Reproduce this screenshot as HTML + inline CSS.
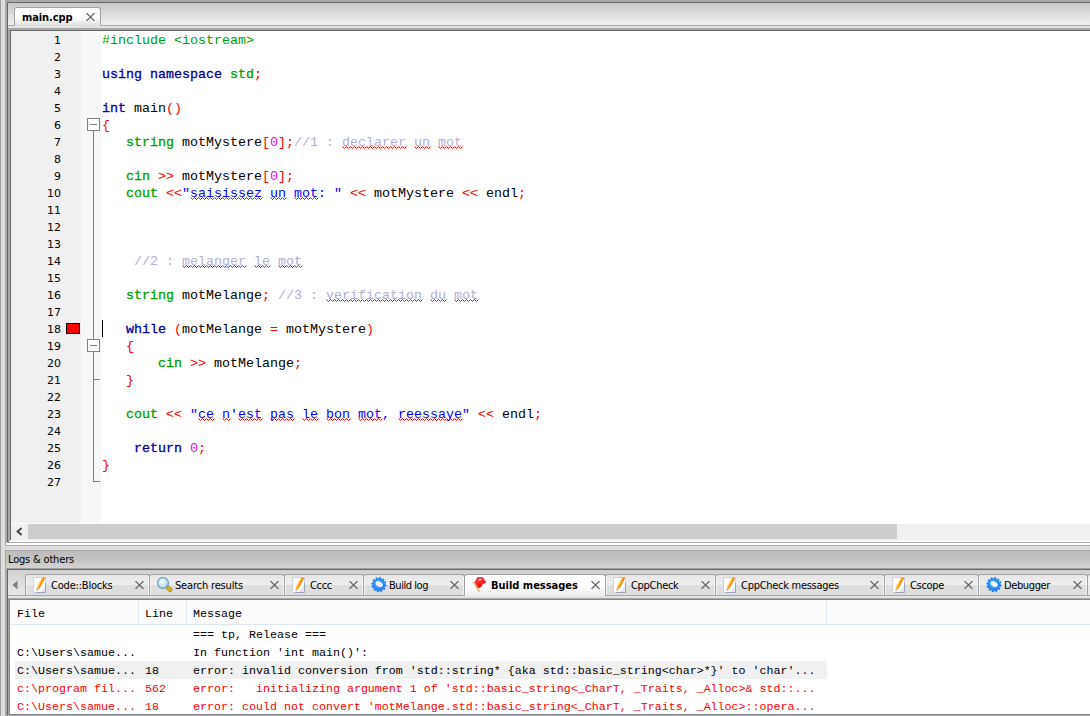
<!DOCTYPE html>
<html><head><meta charset="utf-8"><title>main.cpp</title>
<style>
html,body{margin:0;padding:0;}
body{width:1090px;height:716px;overflow:hidden;position:relative;background:#a8a8a8;font-family:"Liberation Sans","DejaVu Sans",sans-serif;}
.abs{position:absolute;}
/* left strip */
#l0{left:0;top:0;width:1px;height:716px;background:#a0a0a0;}
#l1{left:1px;top:0;width:4px;height:716px;background:#dedede;}
#l2{left:5px;top:0;width:2px;height:546px;background:#a8a8a8;}
#top0{left:5px;top:0;width:1085px;height:2px;background:#a8a8a8;}
/* editor notebook */
#nb{left:7px;top:2px;width:1090px;height:540px;border:1px solid #686868;background:#a8a8a8;box-sizing:border-box;}
#tabbar{left:8px;top:3px;width:1082px;height:22px;background:linear-gradient(#c8c8c8,#dcdcdc 50%,#f0f0f0);}
#tabline{left:8px;top:25px;width:1082px;height:1px;background:#a8a8a8;}
#tabgap{left:8px;top:26px;width:1082px;height:2px;background:#e2e2e2;}
#tab1{left:14px;top:7px;width:87px;height:19px;border:1px solid #a0a0a0;border-bottom:none;border-radius:3px 3px 0 0;background:linear-gradient(#ffffff 50%,#dedede);box-sizing:border-box;}
#tab1 .t{position:absolute;left:7px;top:3px;font-size:11px;font-weight:bold;color:#000;letter-spacing:-0.09px;}
.x{position:absolute;}
.x svg{display:block}
/* editor */
#edborder2{left:10px;top:30px;width:1080px;height:511px;background:#686868;}
#ed{left:11px;top:31px;width:1079px;height:509px;background:#fff;overflow:hidden;}
#nummargin{left:0;top:0;width:70px;height:492px;background:#f0f0f0;}
#foldmargin{left:70px;top:0;width:20px;height:492px;background-color:#fff;
 background-image:linear-gradient(45deg,#f0f0f0 25%,transparent 25%,transparent 75%,#f0f0f0 75%),linear-gradient(45deg,#f0f0f0 25%,transparent 25%,transparent 75%,#f0f0f0 75%);background-size:2px 2px;background-position:0 0,1px 1px;}
#nums{left:0;top:0;width:50px;text-align:right;font-family:"DejaVu Sans","Liberation Sans",sans-serif;font-size:11px;color:#000;}
#nums div{height:17px;line-height:19px;}
#code{left:91px;top:1px;font-family:"Liberation Mono","DejaVu Sans Mono",monospace;font-size:13.333px;color:#000;}
#code .ln{height:17px;line-height:17px;white-space:pre;}
.pp{color:#00a000;}
.kw{color:#0000a0;-webkit-text-stroke:0.3px #0000a0;}
.ukw{color:#00a000;-webkit-text-stroke:0.3px #00a000;}
.op{color:#ff0000;}
.num{color:#f000f0;}
.str{color:#0000ff;}
.cm{color:#b0b0d8;}
.cms{color:#b0b0d8;}
.strs{color:#0000ff;}
#sqs{left:92px;top:0;}
.fold{position:absolute;background:#808080;}
.fbox{position:absolute;width:13px;height:13px;box-sizing:border-box;border:1px solid #808080;background:#fff;}
.fbox i{position:absolute;left:2px;top:5px;width:7px;height:1px;background:#808080;}
#bp{left:55px;top:292px;width:14px;height:11px;box-sizing:border-box;border:1px solid #000;background:#ff0000;}
#caret{left:91px;top:289px;width:1px;height:17px;background:#000;}
/* scrollbar */
#hs{left:0;top:493px;width:1079px;height:16px;background:#f0f0f0;}
#hsthumb{left:17px;top:0;width:869px;height:15px;background:#cdcdcd;}
/* logs */
#gapA{left:10px;top:540px;width:1085px;height:1px;background:#f4f4f4;}
#gapB{left:9px;top:541px;width:1081px;height:1px;background:#fff;}
#gapC{left:8px;top:542px;width:1082px;height:1px;background:#a8a8a8;}
#gapD{left:6px;top:543px;width:1084px;height:2px;background:#fff;}
#gapE{left:5px;top:545px;width:1085px;height:1px;background:#a8a8a8;}
#gapF{left:1px;top:546px;width:1089px;height:4px;background:#dcdcdc;}
#gapG{left:5px;top:550px;width:1085px;height:1px;background:#a8a8a8;}
#logtitle{left:6px;top:551px;width:1084px;height:17px;background:linear-gradient(#bcbcbc,#c4c4c4 50%,#d4d4d4);font-size:11px;color:#000;}
#logl{left:5px;top:551px;width:1px;height:165px;background:#a8a8a8;}
#logl2{left:6px;top:568px;width:1px;height:148px;background:#a8a8a8;}
#logd1{left:7px;top:568px;width:1083px;height:1px;background:#a0a0a0;}
#logd2{left:7px;top:569px;width:1083px;height:1px;background:#686868;}
#logd3{left:7px;top:569px;width:1px;height:147px;background:#686868;}
#logs{left:8px;top:570px;width:1082px;height:146px;background:linear-gradient(#cfcfcf,#dedede 12px,#e6e6e6 25px,#e6e6e6);}
#logs2{left:8px;top:595px;width:1082px;height:1px;background:#a8a8a8;}
#logs3{left:8px;top:596px;width:1082px;height:2px;background:#e4e4e4;}
#logs4{left:8px;top:598px;width:1082px;height:1px;background:#a8a8a8;}
#logs5{left:8px;top:598px;width:1px;height:118px;background:#a8a8a8;}
#listb{left:9px;top:599px;width:1081px;height:116px;background:#828790;}
#listbot{left:7px;top:715px;width:1083px;height:1px;background:#a8a8a8;}
.ltab{position:absolute;top:574px;height:21px;box-sizing:border-box;border:1px solid #a0a0a0;border-bottom:none;border-radius:3px 3px 0 0;background:linear-gradient(#e6e6e6,#efefef 10px,#dedede 10px,#dedede);box-shadow:inset 1px 0 0 rgba(255,255,255,.6),inset -1px 0 0 rgba(255,255,255,.6);font-size:11px;color:#000;}
.ltab.act{background:linear-gradient(#fff 50%,#ececec);font-weight:bold;height:22px;}
.ltab .t{position:absolute;top:4px;white-space:nowrap;}
.ltab .ic{position:absolute;top:2px;}
.ltab .lx{position:absolute;top:6px;}
.ui{font-family:"DejaVu Sans Condensed","DejaVu Sans","Liberation Sans",sans-serif;font-stretch:condensed;}
#list{left:10px;top:600px;width:1080px;height:114px;overflow:hidden;background:#fff;font-family:"Liberation Mono",monospace;font-size:11.67px;color:#000;white-space:pre;}
#lhead{left:0;top:0;width:1080px;height:24px;background:#fcfcfc;border-bottom:1px solid #dfe8f6;}
.sep{position:absolute;top:0;width:1px;height:24px;background:#e2eaf8;}
.row{position:absolute;left:0;height:18px;line-height:18px;}
.row span{position:absolute;top:0}
.c1{left:7px}.c2{left:135px}.c3{left:183px}
.red{color:#ff0000}
#hl{left:5px;top:61px;width:812px;height:18px;background:#f0f0f0;}
</style></head><body>
<svg width="0" height="0" style="position:absolute"><defs>
<linearGradient id="g-pen" x1="0" y1="0" x2="1" y2="0.4"><stop offset="0" stop-color="#ffc840"/><stop offset="0.5" stop-color="#ff9a10"/><stop offset="1" stop-color="#f06a08"/></linearGradient>
<radialGradient id="g-lens" cx="0.4" cy="0.35" r="0.7"><stop offset="0" stop-color="#f4fbff"/><stop offset="1" stop-color="#a8d0e4"/></radialGradient>
<linearGradient id="g-flag" x1="0" y1="0" x2="0.3" y2="1"><stop offset="0" stop-color="#ff4a54"/><stop offset="0.4" stop-color="#ff3038"/><stop offset="1" stop-color="#f40810"/></linearGradient>
<radialGradient id="g-gear" cx="0.5" cy="0.45" r="0.55"><stop offset="0.4" stop-color="#40a8ff"/><stop offset="1" stop-color="#1472ec"/></radialGradient>
</defs></svg>
<div class="abs" id="nb"></div>
<div class="abs" id="l0"></div><div class="abs" id="l1"></div><div class="abs" id="l2"></div><div class="abs" id="top0"></div>
<div class="abs" id="tabbar"></div><div class="abs" id="tabline"></div><div class="abs" id="tabgap"></div>
<div class="abs ui" id="tab1"><span class="t">main.cpp</span>
<span class="x" style="left:71px;top:5px"><svg width="9" height="8" viewBox="0 0 9 8"><path d="M0.4 0L8.6 8M8.6 0L0.4 8" stroke="#686868" stroke-width="1.3" fill="none"/></svg></span></div>
<div class="abs" id="edborder2"></div>
<div class="abs" id="ed">
 <div class="abs" id="nummargin"></div>
 <div class="abs" id="foldmargin"></div>
 <div class="fold" style="left:82px;top:100px;width:1px;height:351px"></div>
 <div class="fold" style="left:82px;top:450px;width:7px;height:1px"></div>
 <div class="fold" style="left:82px;top:348px;width:7px;height:1px"></div>
 <div class="fbox" style="left:76px;top:87px"><i></i></div>
 <div class="fbox" style="left:76px;top:308px"><i></i></div>
 <div class="abs" id="bp"></div>
 <div class="abs" id="caret"></div>
 <div class="abs" id="nums">
<div>1</div>
<div>2</div>
<div>3</div>
<div>4</div>
<div>5</div>
<div>6</div>
<div>7</div>
<div>8</div>
<div>9</div>
<div>10</div>
<div>11</div>
<div>12</div>
<div>13</div>
<div>14</div>
<div>15</div>
<div>16</div>
<div>17</div>
<div>18</div>
<div>19</div>
<div>20</div>
<div>21</div>
<div>22</div>
<div>23</div>
<div>24</div>
<div>25</div>
<div>26</div>
<div>27</div>
 </div>
 <svg class="abs" id="sqs" width="600" height="492" viewBox="0 0 600 492"><path d="M239.5 115.5l2 2l2 -2l2 2l2 -2l2 2l2 -2l2 2l2 -2l2 2l2 -2l2 2l2 -2l2 2l2 -2l2 2l2 -2l2 2l2 -2l2 2l2 -2l2 2l2 -2l2 2l2 -2l2 2l2 -2l2 2l2 -2l2 2l2 -2l2 2l2 -2M311.5 115.5l2 2l2 -2l2 2l2 -2l2 2l2 -2l2 2l2 -2M335.5 115.5l2 2l2 -2l2 2l2 -2l2 2l2 -2l2 2l2 -2l2 2l2 -2l2 2l2 -2M87.5 166.5l2 2l2 -2l2 2l2 -2l2 2l2 -2l2 2l2 -2l2 2l2 -2l2 2l2 -2l2 2l2 -2l2 2l2 -2l2 2l2 -2l2 2l2 -2l2 2l2 -2l2 2l2 -2l2 2l2 -2l2 2l2 -2l2 2l2 -2l2 2l2 -2l2 2l2 -2l2 2l2 -2M167.5 166.5l2 2l2 -2l2 2l2 -2l2 2l2 -2l2 2l2 -2M191.5 166.5l2 2l2 -2l2 2l2 -2l2 2l2 -2l2 2l2 -2l2 2l2 -2l2 2l2 -2M79.5 234.5l2 2l2 -2l2 2l2 -2l2 2l2 -2l2 2l2 -2l2 2l2 -2l2 2l2 -2l2 2l2 -2l2 2l2 -2l2 2l2 -2l2 2l2 -2l2 2l2 -2l2 2l2 -2l2 2l2 -2l2 2l2 -2l2 2l2 -2l2 2l2 -2M151.5 234.5l2 2l2 -2l2 2l2 -2l2 2l2 -2l2 2l2 -2M175.5 234.5l2 2l2 -2l2 2l2 -2l2 2l2 -2l2 2l2 -2l2 2l2 -2l2 2l2 -2M223.5 268.5l2 2l2 -2l2 2l2 -2l2 2l2 -2l2 2l2 -2l2 2l2 -2l2 2l2 -2l2 2l2 -2l2 2l2 -2l2 2l2 -2l2 2l2 -2l2 2l2 -2l2 2l2 -2l2 2l2 -2l2 2l2 -2l2 2l2 -2l2 2l2 -2l2 2l2 -2l2 2l2 -2l2 2l2 -2l2 2l2 -2l2 2l2 -2l2 2l2 -2l2 2l2 -2l2 2l2 -2M327.5 268.5l2 2l2 -2l2 2l2 -2l2 2l2 -2l2 2l2 -2M351.5 268.5l2 2l2 -2l2 2l2 -2l2 2l2 -2l2 2l2 -2l2 2l2 -2l2 2l2 -2M95.5 387.5l2 2l2 -2l2 2l2 -2l2 2l2 -2l2 2l2 -2M119.5 387.5l2 2l2 -2l2 2l2 -2M135.5 387.5l2 2l2 -2l2 2l2 -2l2 2l2 -2l2 2l2 -2l2 2l2 -2l2 2l2 -2M167.5 387.5l2 2l2 -2l2 2l2 -2l2 2l2 -2l2 2l2 -2l2 2l2 -2l2 2l2 -2M199.5 387.5l2 2l2 -2l2 2l2 -2l2 2l2 -2l2 2l2 -2M223.5 387.5l2 2l2 -2l2 2l2 -2l2 2l2 -2l2 2l2 -2l2 2l2 -2l2 2l2 -2M255.5 387.5l2 2l2 -2l2 2l2 -2l2 2l2 -2l2 2l2 -2l2 2l2 -2l2 2l2 -2M295.5 387.5l2 2l2 -2l2 2l2 -2l2 2l2 -2l2 2l2 -2l2 2l2 -2l2 2l2 -2l2 2l2 -2l2 2l2 -2l2 2l2 -2l2 2l2 -2l2 2l2 -2l2 2l2 -2l2 2l2 -2l2 2l2 -2l2 2l2 -2l2 2l2 -2" fill="none" stroke="#ff0000" stroke-width="1" stroke-linejoin="miter"/></svg>
 <div class="abs" id="code">
<div class="ln"><span class="pp">#include &lt;iostream&gt;</span></div>
<div class="ln"></div>
<div class="ln"><span class="kw">using</span> <span class="kw">namespace</span> <span class="ukw">std</span><span class="op">;</span></div>
<div class="ln"></div>
<div class="ln"><span class="kw">int</span> main<span class="op">()</span></div>
<div class="ln"><span class="op">{</span></div>
<div class="ln">   <span class="ukw">string</span> motMystere<span class="op">[</span><span class="num">0</span><span class="op">];</span><span class="cm">//1 : </span><span class="cms">declarer</span><span class="cm"> </span><span class="cms">un</span><span class="cm"> </span><span class="cms">mot</span></div>
<div class="ln"></div>
<div class="ln">   <span class="ukw">cin</span> <span class="op">&gt;&gt;</span> motMystere<span class="op">[</span><span class="num">0</span><span class="op">];</span></div>
<div class="ln">   <span class="ukw">cout</span> <span class="op">&lt;&lt;</span><span class="str">"</span><span class="strs">saisissez</span><span class="str"> </span><span class="strs">un</span><span class="str"> </span><span class="strs">mot</span><span class="str">: "</span> <span class="op">&lt;&lt;</span> motMystere <span class="op">&lt;&lt;</span> endl<span class="op">;</span></div>
<div class="ln"></div>
<div class="ln"></div>
<div class="ln"></div>
<div class="ln">    <span class="cm">//2 : </span><span class="cms">melanger</span><span class="cm"> </span><span class="cms">le</span><span class="cm"> </span><span class="cms">mot</span></div>
<div class="ln"></div>
<div class="ln">   <span class="ukw">string</span> motMelange<span class="op">;</span> <span class="cm">//3 : </span><span class="cms">verification</span><span class="cm"> </span><span class="cms">du</span><span class="cm"> </span><span class="cms">mot</span></div>
<div class="ln"></div>
<div class="ln">   <span class="kw">while</span> <span class="op">(</span>motMelange <span class="op">=</span> motMystere<span class="op">)</span></div>
<div class="ln">   <span class="op">{</span></div>
<div class="ln">       <span class="ukw">cin</span> <span class="op">&gt;&gt;</span> motMelange<span class="op">;</span></div>
<div class="ln">   <span class="op">}</span></div>
<div class="ln"></div>
<div class="ln">   <span class="ukw">cout</span> <span class="op">&lt;&lt;</span> <span class="str">"</span><span class="strs">ce</span><span class="str"> </span><span class="strs">n</span><span class="str">'</span><span class="strs">est</span><span class="str"> </span><span class="strs">pas</span><span class="str"> </span><span class="strs">le</span><span class="str"> </span><span class="strs">bon</span><span class="str"> </span><span class="strs">mot</span><span class="str">, </span><span class="strs">reessaye</span><span class="str">"</span> <span class="op">&lt;&lt;</span> endl<span class="op">;</span></div>
<div class="ln"></div>
<div class="ln">    <span class="kw">return</span> <span class="num">0</span><span class="op">;</span></div>
<div class="ln"><span class="op">}</span></div>
<div class="ln"></div>
 </div>
 <div class="abs" id="hs"><div class="abs" id="hsthumb"></div>
  <svg class="abs" style="left:5px;top:3px" width="7" height="9" viewBox="0 0 7 9"><path d="M5.6 0.9L1.6 4.5L5.6 8.1" stroke="#484848" stroke-width="2" fill="none"/></svg>
 </div>
</div>
<div class="abs" id="gapA"></div><div class="abs" id="gapB"></div><div class="abs" id="gapC"></div><div class="abs" id="gapD"></div><div class="abs" id="gapE"></div><div class="abs" id="gapF"></div><div class="abs" id="gapG"></div>
<div class="abs ui" id="logtitle"><span style="position:absolute;left:2px;top:2px;letter-spacing:-0.18px">Logs &amp; others</span></div>
<div class="abs" id="logl"></div><div class="abs" id="logl2"></div><div class="abs" id="logd1"></div><div class="abs" id="logd2"></div><div class="abs" id="logd3"></div>
<div class="abs" id="logs"></div><div class="abs" id="logs2"></div><div class="abs" id="logs3"></div><div class="abs" id="logs4"></div><div class="abs" id="logs5"></div>
<svg class="abs" style="left:12px;top:580px" width="6" height="10" viewBox="0 0 6 10"><path d="M5.5 0.5V9.5L0.5 5Z" fill="#808080"/></svg>
<div class="ui">
<div class="ltab" style="left:25px;width:125px"><svg class="ic" style="left:6px" width="16" height="16" viewBox="0 0 16 16"><path d="M1.5 0.5H13.5V15.5H1.5Z" fill="#fff" stroke="#ccd0e0" stroke-width="1"/><path d="M13.5 6V15.5H4" fill="none" stroke="#9ca2bc" stroke-width="1"/><path d="M8 15L13 15L13 9Z" fill="#e4e6f0"/><path d="M10.5 -0.3L13.1 1L7.4 11.9L4.8 10.5Z" fill="url(#g-pen)"/><path d="M10.5 -0.3L11.4 0.15L5.7 11L4.8 10.5Z" fill="#ffd458"/><path d="M4.8 10.5L7.4 11.9L4.7 13.8Z" fill="#eab878"/><path d="M4.75 12.5L5.8 13.05L4.7 13.8Z" fill="#903c10"/></svg><span class="t" style="left:25px;letter-spacing:-0.20px">Code::Blocks</span><svg class="lx" style="left:109px" width="9" height="8" viewBox="0 0 9 8"><path d="M0.4 0L8.6 8M8.6 0L0.4 8" stroke="#686868" stroke-width="1.3" fill="none"/></svg></div>
<div class="ltab" style="left:149px;width:136px"><svg class="ic" style="left:7px" width="16" height="16" viewBox="0 0 16 16"><path d="M10 10L13.2 12.9" stroke="#b08a14" stroke-width="4.2" stroke-linecap="round"/><path d="M10 10L13.2 12.9" stroke="#dcb428" stroke-width="2.4" stroke-linecap="round"/><circle cx="6" cy="6" r="5.4" fill="url(#g-lens)" stroke="#5c9cb8" stroke-width="1.2"/></svg><span class="t" style="left:25px;letter-spacing:-0.16px">Search results</span><svg class="lx" style="left:120px" width="9" height="8" viewBox="0 0 9 8"><path d="M0.4 0L8.6 8M8.6 0L0.4 8" stroke="#686868" stroke-width="1.3" fill="none"/></svg></div>
<div class="ltab" style="left:284px;width:80px"><svg class="ic" style="left:6px" width="16" height="16" viewBox="0 0 16 16"><path d="M1.5 0.5H13.5V15.5H1.5Z" fill="#fff" stroke="#ccd0e0" stroke-width="1"/><path d="M13.5 6V15.5H4" fill="none" stroke="#9ca2bc" stroke-width="1"/><path d="M8 15L13 15L13 9Z" fill="#e4e6f0"/><path d="M10.5 -0.3L13.1 1L7.4 11.9L4.8 10.5Z" fill="url(#g-pen)"/><path d="M10.5 -0.3L11.4 0.15L5.7 11L4.8 10.5Z" fill="#ffd458"/><path d="M4.8 10.5L7.4 11.9L4.7 13.8Z" fill="#eab878"/><path d="M4.75 12.5L5.8 13.05L4.7 13.8Z" fill="#903c10"/></svg><span class="t" style="left:25px;letter-spacing:-0.31px">Cccc</span><svg class="lx" style="left:64px" width="9" height="8" viewBox="0 0 9 8"><path d="M0.4 0L8.6 8M8.6 0L0.4 8" stroke="#686868" stroke-width="1.3" fill="none"/></svg></div>
<div class="ltab" style="left:363px;width:102px"><svg class="ic" style="left:7px" width="16" height="16" viewBox="0 0 16 16"><circle cx="7.9" cy="7.6" r="6.8" fill="none" stroke="#1878f0" stroke-width="1.5" stroke-dasharray="2.05 1.51"/><circle cx="7.9" cy="7.6" r="6.3" fill="url(#g-gear)"/><ellipse cx="8.1" cy="7.1" rx="3.9" ry="2.4" transform="rotate(30 8.1 7.1)" fill="#f0f2f6"/></svg><span class="t" style="left:25px;letter-spacing:-0.45px">Build log</span><svg class="lx" style="left:86px" width="9" height="8" viewBox="0 0 9 8"><path d="M0.4 0L8.6 8M8.6 0L0.4 8" stroke="#686868" stroke-width="1.3" fill="none"/></svg></div>
<div class="ltab act" style="left:464px;width:142px"><svg class="ic" style="left:8px" width="16" height="16" viewBox="0 0 16 16"><path d="M0.6 4.8L6.6 15.2" stroke="#dc9c3c" stroke-width="1.5" stroke-dasharray="1.2 0.5"/><path d="M0.6 4.8L6.6 15.2" stroke="#f0c870" stroke-width="1.5" stroke-dasharray="0.5 1.2" stroke-dashoffset="-1.2"/><path d="M2 5.2L4.6 0.4L9.4 0.2L12.6 4.9L12.3 5.8L9.4 6.8L8.4 9.4L5.6 10.9Z" fill="url(#g-flag)" stroke="#d81424" stroke-width="0.7"/><ellipse cx="7" cy="2.7" rx="1.6" ry="1" transform="rotate(-30 7 2.7)" fill="#ffd0d4" opacity="0.85"/></svg><span class="t" style="left:26px;letter-spacing:-0.01px">Build messages</span><svg class="lx" style="left:126px" width="9" height="8" viewBox="0 0 9 8"><path d="M0.4 0L8.6 8M8.6 0L0.4 8" stroke="#686868" stroke-width="1.3" fill="none"/></svg></div>
<div class="ltab" style="left:605px;width:111px"><svg class="ic" style="left:6px" width="16" height="16" viewBox="0 0 16 16"><path d="M1.5 0.5H13.5V15.5H1.5Z" fill="#fff" stroke="#ccd0e0" stroke-width="1"/><path d="M13.5 6V15.5H4" fill="none" stroke="#9ca2bc" stroke-width="1"/><path d="M8 15L13 15L13 9Z" fill="#e4e6f0"/><path d="M10.5 -0.3L13.1 1L7.4 11.9L4.8 10.5Z" fill="url(#g-pen)"/><path d="M10.5 -0.3L11.4 0.15L5.7 11L4.8 10.5Z" fill="#ffd458"/><path d="M4.8 10.5L7.4 11.9L4.7 13.8Z" fill="#eab878"/><path d="M4.75 12.5L5.8 13.05L4.7 13.8Z" fill="#903c10"/></svg><span class="t" style="left:25px;letter-spacing:-0.30px">CppCheck</span><svg class="lx" style="left:95px" width="9" height="8" viewBox="0 0 9 8"><path d="M0.4 0L8.6 8M8.6 0L0.4 8" stroke="#686868" stroke-width="1.3" fill="none"/></svg></div>
<div class="ltab" style="left:715px;width:170px"><svg class="ic" style="left:6px" width="16" height="16" viewBox="0 0 16 16"><path d="M1.5 0.5H13.5V15.5H1.5Z" fill="#fff" stroke="#ccd0e0" stroke-width="1"/><path d="M13.5 6V15.5H4" fill="none" stroke="#9ca2bc" stroke-width="1"/><path d="M8 15L13 15L13 9Z" fill="#e4e6f0"/><path d="M10.5 -0.3L13.1 1L7.4 11.9L4.8 10.5Z" fill="url(#g-pen)"/><path d="M10.5 -0.3L11.4 0.15L5.7 11L4.8 10.5Z" fill="#ffd458"/><path d="M4.8 10.5L7.4 11.9L4.7 13.8Z" fill="#eab878"/><path d="M4.75 12.5L5.8 13.05L4.7 13.8Z" fill="#903c10"/></svg><span class="t" style="left:25px;letter-spacing:-0.28px">CppCheck messages</span><svg class="lx" style="left:154px" width="9" height="8" viewBox="0 0 9 8"><path d="M0.4 0L8.6 8M8.6 0L0.4 8" stroke="#686868" stroke-width="1.3" fill="none"/></svg></div>
<div class="ltab" style="left:884px;width:95px"><svg class="ic" style="left:6px" width="16" height="16" viewBox="0 0 16 16"><path d="M1.5 0.5H13.5V15.5H1.5Z" fill="#fff" stroke="#ccd0e0" stroke-width="1"/><path d="M13.5 6V15.5H4" fill="none" stroke="#9ca2bc" stroke-width="1"/><path d="M8 15L13 15L13 9Z" fill="#e4e6f0"/><path d="M10.5 -0.3L13.1 1L7.4 11.9L4.8 10.5Z" fill="url(#g-pen)"/><path d="M10.5 -0.3L11.4 0.15L5.7 11L4.8 10.5Z" fill="#ffd458"/><path d="M4.8 10.5L7.4 11.9L4.7 13.8Z" fill="#eab878"/><path d="M4.75 12.5L5.8 13.05L4.7 13.8Z" fill="#903c10"/></svg><span class="t" style="left:25px;letter-spacing:-0.33px">Cscope</span><svg class="lx" style="left:79px" width="9" height="8" viewBox="0 0 9 8"><path d="M0.4 0L8.6 8M8.6 0L0.4 8" stroke="#686868" stroke-width="1.3" fill="none"/></svg></div>
<div class="ltab" style="left:978px;width:110px"><svg class="ic" style="left:7px" width="16" height="16" viewBox="0 0 16 16"><circle cx="7.9" cy="7.6" r="6.8" fill="none" stroke="#1878f0" stroke-width="1.5" stroke-dasharray="2.05 1.51"/><circle cx="7.9" cy="7.6" r="6.3" fill="url(#g-gear)"/><ellipse cx="8.1" cy="7.1" rx="3.9" ry="2.4" transform="rotate(30 8.1 7.1)" fill="#f0f2f6"/></svg><span class="t" style="left:25px;letter-spacing:-0.38px">Debugger</span><svg class="lx" style="left:94px" width="9" height="8" viewBox="0 0 9 8"><path d="M0.4 0L8.6 8M8.6 0L0.4 8" stroke="#686868" stroke-width="1.3" fill="none"/></svg></div>
<div class="ltab" style="left:1087px;width:114px"><svg class="ic" style="left:6px" width="16" height="16" viewBox="0 0 16 16"><path d="M1.5 0.5H13.5V15.5H1.5Z" fill="#fff" stroke="#ccd0e0" stroke-width="1"/><path d="M13.5 6V15.5H4" fill="none" stroke="#9ca2bc" stroke-width="1"/><path d="M8 15L13 15L13 9Z" fill="#e4e6f0"/><path d="M10.5 -0.3L13.1 1L7.4 11.9L4.8 10.5Z" fill="url(#g-pen)"/><path d="M10.5 -0.3L11.4 0.15L5.7 11L4.8 10.5Z" fill="#ffd458"/><path d="M4.8 10.5L7.4 11.9L4.7 13.8Z" fill="#eab878"/><path d="M4.75 12.5L5.8 13.05L4.7 13.8Z" fill="#903c10"/></svg><span class="t" style="left:25px;letter-spacing:0.00px"></span><svg class="lx" style="left:98px" width="9" height="8" viewBox="0 0 9 8"><path d="M0.4 0L8.6 8M8.6 0L0.4 8" stroke="#686868" stroke-width="1.3" fill="none"/></svg></div>
</div>
<div class="abs" id="listb"></div><div class="abs" id="listbot"></div>
<div class="abs" id="list">
 <div class="abs" id="lhead"></div><div class="sep" style="left:128px"></div><div class="sep" style="left:176px"></div><div class="sep" style="left:816px"></div>
 <div class="abs" id="hl"></div>
 <div class="row" style="top:5px"><span class="c1">File</span><span class="c2">Line</span><span class="c3">Message</span></div>
 <div class="row" style="top:26px"><span class="c3">=== tp, Release ===</span></div>
 <div class="row" style="top:44px"><span class="c1">C:\Users\samue...</span><span class="c3">In function 'int main()':</span></div>
 <div class="row" style="top:62px"><span class="c1">C:\Users\samue...</span><span class="c2">18</span><span class="c3">error: invalid conversion from 'std::string* {aka std::basic_string&lt;char&gt;*}' to 'char'...</span></div>
 <div class="row red" style="top:80px"><span class="c1">c:\program fil...</span><span class="c2">562</span><span class="c3">error:   initializing argument 1 of 'std::basic_string&lt;_CharT, _Traits, _Alloc&gt;&amp; std::...</span></div>
 <div class="row red" style="top:98px"><span class="c1">C:\Users\samue...</span><span class="c2">18</span><span class="c3">error: could not convert 'motMelange.std::basic_string&lt;_CharT, _Traits, _Alloc&gt;::opera...</span></div>
</div>
</body></html>
